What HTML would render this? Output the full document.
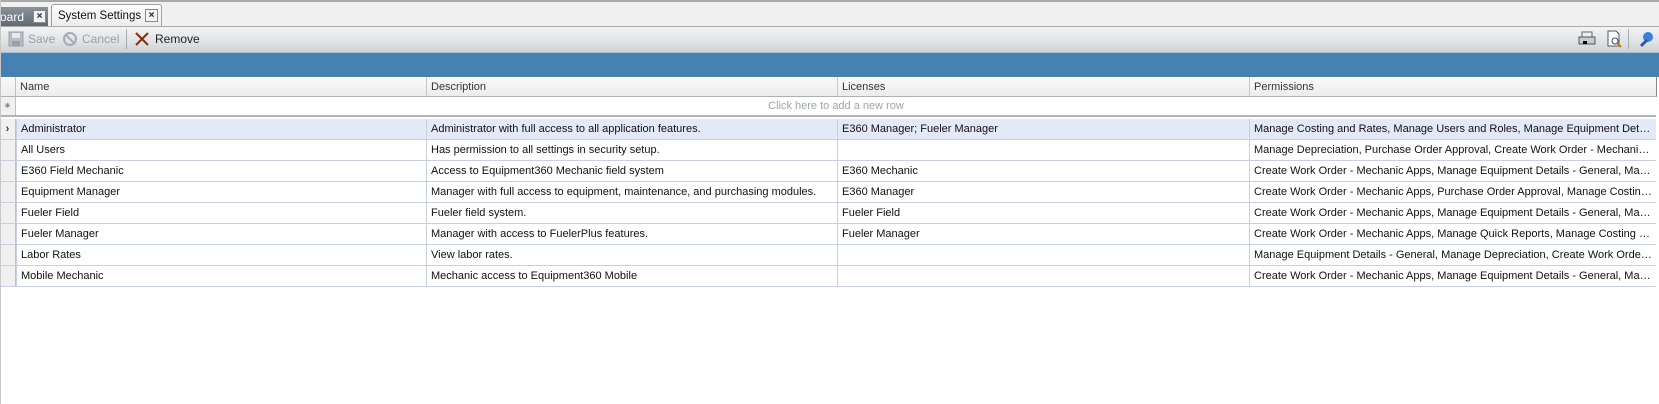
<!DOCTYPE html>
<html><head><meta charset="utf-8"><style>
*{margin:0;padding:0;box-sizing:border-box}
body{width:1659px;height:404px;background:#fff;font-family:"Liberation Sans",Tahoma,sans-serif;font-size:11px;color:#111;position:relative;overflow:hidden}
.abs{position:absolute}
.topline{left:0;top:0;width:1659px;height:27px;background:#f0f0f0;border-top:2px solid #a8a8a8}
.tabbar-bottom{left:0;top:26px;width:1659px;height:1px;background:#aaa}
.tab1{left:0;top:7px;width:48px;height:20px;background:linear-gradient(#8a929b,#5f6770);color:#fff;padding:3px 0 0 0;font-size:12px}
.tab2{left:51px;top:4px;width:111px;height:23px;background:linear-gradient(#fcfcfc,#ececec);border:1px solid #a0a0a0;border-bottom:none;border-radius:3px 3px 0 0;font-size:11.5px;padding:5px 0 0 6px;color:#111;white-space:nowrap}
.x{position:absolute;width:13px;height:13px;border:1px solid #888;background:#f4f4f4;font-size:10px;line-height:11px;text-align:center;color:#222;font-weight:bold}
.toolbar{left:0;top:27px;width:1659px;height:26px;background:linear-gradient(#f2f3f5,#dfe2e6 60%,#cdd1d6);border-bottom:1px solid #b8bcc2}
.blue{left:0;top:53px;width:1659px;height:24px;background:#4581b3}
.hdr{left:0;top:77px;width:1657px;height:20px;background:linear-gradient(#fafafa,#ececec);border-bottom:1px solid #b0b0b0;border-right:1px solid #888}
.cell{position:absolute;top:0;height:100%;padding-left:4px;padding-right:4px;white-space:nowrap;overflow:hidden;text-overflow:ellipsis;line-height:20px}
.row{position:absolute;left:0;width:1656px;height:21px;border-bottom:1px solid #c8d0e0}
.row .cell{border-left:1px solid #c8d0e0}
.sel{background:#e3e9f7}
.ind{position:absolute;left:0;top:0;width:16px;height:100%;background:#f0f0f0;border-right:1px solid #c0c0c0}
</style></head><body>
<div class="abs topline"></div>
<div class="abs tab1">oard<div class="x" style="left:33px;top:3px;color:#222">×</div></div>
<div class="abs tab2">System Settings<div class="x" style="left:93px;top:4px">×</div></div>
<div class="abs tabbar-bottom"></div>
<div class="abs toolbar">
 <svg class="abs" style="left:8px;top:4px" width="16" height="16"><rect x="1" y="1" width="14" height="14" fill="#b8bcc2" stroke="#9aa0a8"/><rect x="4" y="2" width="8" height="5" fill="#e8e8e8"/><rect x="4" y="10" width="8" height="5" fill="#9aa0a8"/></svg>
 <span class="abs" style="left:28px;top:5px;color:#9a9ea4;font-size:12px">Save</span>
 <svg class="abs" style="left:62px;top:4px" width="16" height="16"><circle cx="8" cy="8" r="6" fill="none" stroke="#a8acb2" stroke-width="2"/><line x1="4" y1="4" x2="12" y2="12" stroke="#a8acb2" stroke-width="2"/></svg>
 <span class="abs" style="left:82px;top:5px;color:#9a9ea4;font-size:12px">Cancel</span>
 <div class="abs" style="left:126px;top:2px;width:1px;height:20px;background:#a8acb2"></div>
 <svg class="abs" style="left:134px;top:4px" width="16" height="16"><path d="M2 2L14 14M14 2L2 14" stroke="#8a2a0a" stroke-width="2"/></svg>
 <span class="abs" style="left:155px;top:5px;color:#222;font-size:12px">Remove</span>
 <svg class="abs" style="left:1578px;top:4px" width="18" height="16"><rect x="4" y="1" width="10" height="5" fill="#eee" stroke="#666"/><rect x="1" y="6" width="16" height="7" fill="#c8ccd2" stroke="#555"/><rect x="5" y="10" width="4" height="3" fill="#000"/></svg>
 <svg class="abs" style="left:1605px;top:3px" width="18" height="18"><path d="M3 1h8l3 3v12H3z" fill="#fff" stroke="#556"/><circle cx="10" cy="11" r="3" fill="none" stroke="#446"/><path d="M12 13l4 4" stroke="#c70" stroke-width="2"/></svg>
 <div class="abs" style="left:1628px;top:2px;width:1px;height:20px;background:#a8acb2"></div>
 <svg class="abs" style="left:1638px;top:3px" width="18" height="18"><circle cx="10" cy="7" r="5" fill="#3d7fd6"/><path d="M3 16l6-6" stroke="#2a5aa0" stroke-width="3"/></svg>
</div>
<div class="abs blue"></div>
<div class="abs hdr">
 <div class="ind" style="background:transparent;border-right:1px solid #c0c0c0"></div>
 <div class="cell" style="left:16px;width:410px;color:#333">Name</div>
 <div class="cell" style="left:426px;width:411px;border-left:1px solid #c8c8c8;color:#333">Description</div>
 <div class="cell" style="left:837px;width:412px;border-left:1px solid #c8c8c8;color:#333">Licenses</div>
 <div class="cell" style="left:1249px;width:408px;border-left:1px solid #c8c8c8;color:#333">Permissions</div>
</div>
<div class="abs" style="left:0;top:97px;width:1656px;height:20px;border-bottom:2px solid #b4b4b4">
 <div class="ind" style="font-size:10px;color:#888;text-align:center;line-height:19px">⁕</div>
 <div style="position:absolute;left:16px;right:0;text-align:center;color:#9aaa9a;line-height:19px">Click here to add a new row</div>
</div>
<div class="abs" style="left:0;top:119px;width:1656px;height:170px">
<div class="row sel" style="top:0"><div class="ind" style="text-align:center;line-height:20px;font-weight:bold;color:#333">›</div><div class="cell" style="left:16px;width:410px">Administrator</div><div class="cell" style="left:426px;width:411px">Administrator with full access to all application features.</div><div class="cell" style="left:837px;width:412px">E360 Manager; Fueler Manager</div><div class="cell" style="left:1249px;width:407px">Manage Costing and Rates, Manage Users and Roles, Manage Equipment Details - General</div></div>
<div class="row" style="top:21px"><div class="ind"></div><div class="cell" style="left:16px;width:410px">All Users</div><div class="cell" style="left:426px;width:411px">Has permission to all settings in security setup.</div><div class="cell" style="left:837px;width:412px"></div><div class="cell" style="left:1249px;width:407px">Manage Depreciation, Purchase Order Approval, Create Work Order - Mechanic Apps</div></div>
<div class="row" style="top:42px"><div class="ind"></div><div class="cell" style="left:16px;width:410px">E360 Field Mechanic</div><div class="cell" style="left:426px;width:411px">Access to Equipment360 Mechanic field system</div><div class="cell" style="left:837px;width:412px">E360 Mechanic</div><div class="cell" style="left:1249px;width:407px">Create Work Order - Mechanic Apps, Manage Equipment Details - General, Manage Depreciation</div></div>
<div class="row" style="top:63px"><div class="ind"></div><div class="cell" style="left:16px;width:410px">Equipment Manager</div><div class="cell" style="left:426px;width:411px">Manager with full access to equipment, maintenance, and purchasing modules.</div><div class="cell" style="left:837px;width:412px">E360 Manager</div><div class="cell" style="left:1249px;width:407px">Create Work Order - Mechanic Apps, Purchase Order Approval, Manage Costing and Rates</div></div>
<div class="row" style="top:84px"><div class="ind"></div><div class="cell" style="left:16px;width:410px">Fueler Field</div><div class="cell" style="left:426px;width:411px">Fueler field system.</div><div class="cell" style="left:837px;width:412px">Fueler Field</div><div class="cell" style="left:1249px;width:407px">Create Work Order - Mechanic Apps, Manage Equipment Details - General, Manage Depreciation</div></div>
<div class="row" style="top:105px"><div class="ind"></div><div class="cell" style="left:16px;width:410px">Fueler Manager</div><div class="cell" style="left:426px;width:411px">Manager with access to FuelerPlus features.</div><div class="cell" style="left:837px;width:412px">Fueler Manager</div><div class="cell" style="left:1249px;width:407px">Create Work Order - Mechanic Apps, Manage Quick Reports, Manage Costing and Rates</div></div>
<div class="row" style="top:126px"><div class="ind"></div><div class="cell" style="left:16px;width:410px">Labor Rates</div><div class="cell" style="left:426px;width:411px">View labor rates.</div><div class="cell" style="left:837px;width:412px"></div><div class="cell" style="left:1249px;width:407px">Manage Equipment Details - General, Manage Depreciation, Create Work Order - Mechanic Apps</div></div>
<div class="row" style="top:147px"><div class="ind"></div><div class="cell" style="left:16px;width:410px">Mobile Mechanic</div><div class="cell" style="left:426px;width:411px">Mechanic access to Equipment360 Mobile</div><div class="cell" style="left:837px;width:412px"></div><div class="cell" style="left:1249px;width:407px">Create Work Order - Mechanic Apps, Manage Equipment Details - General, Manage Depreciation</div></div>
</div>
<div class="abs" style="left:0;top:0;width:1px;height:404px;background:#c8c8c8"></div>
</body></html>
